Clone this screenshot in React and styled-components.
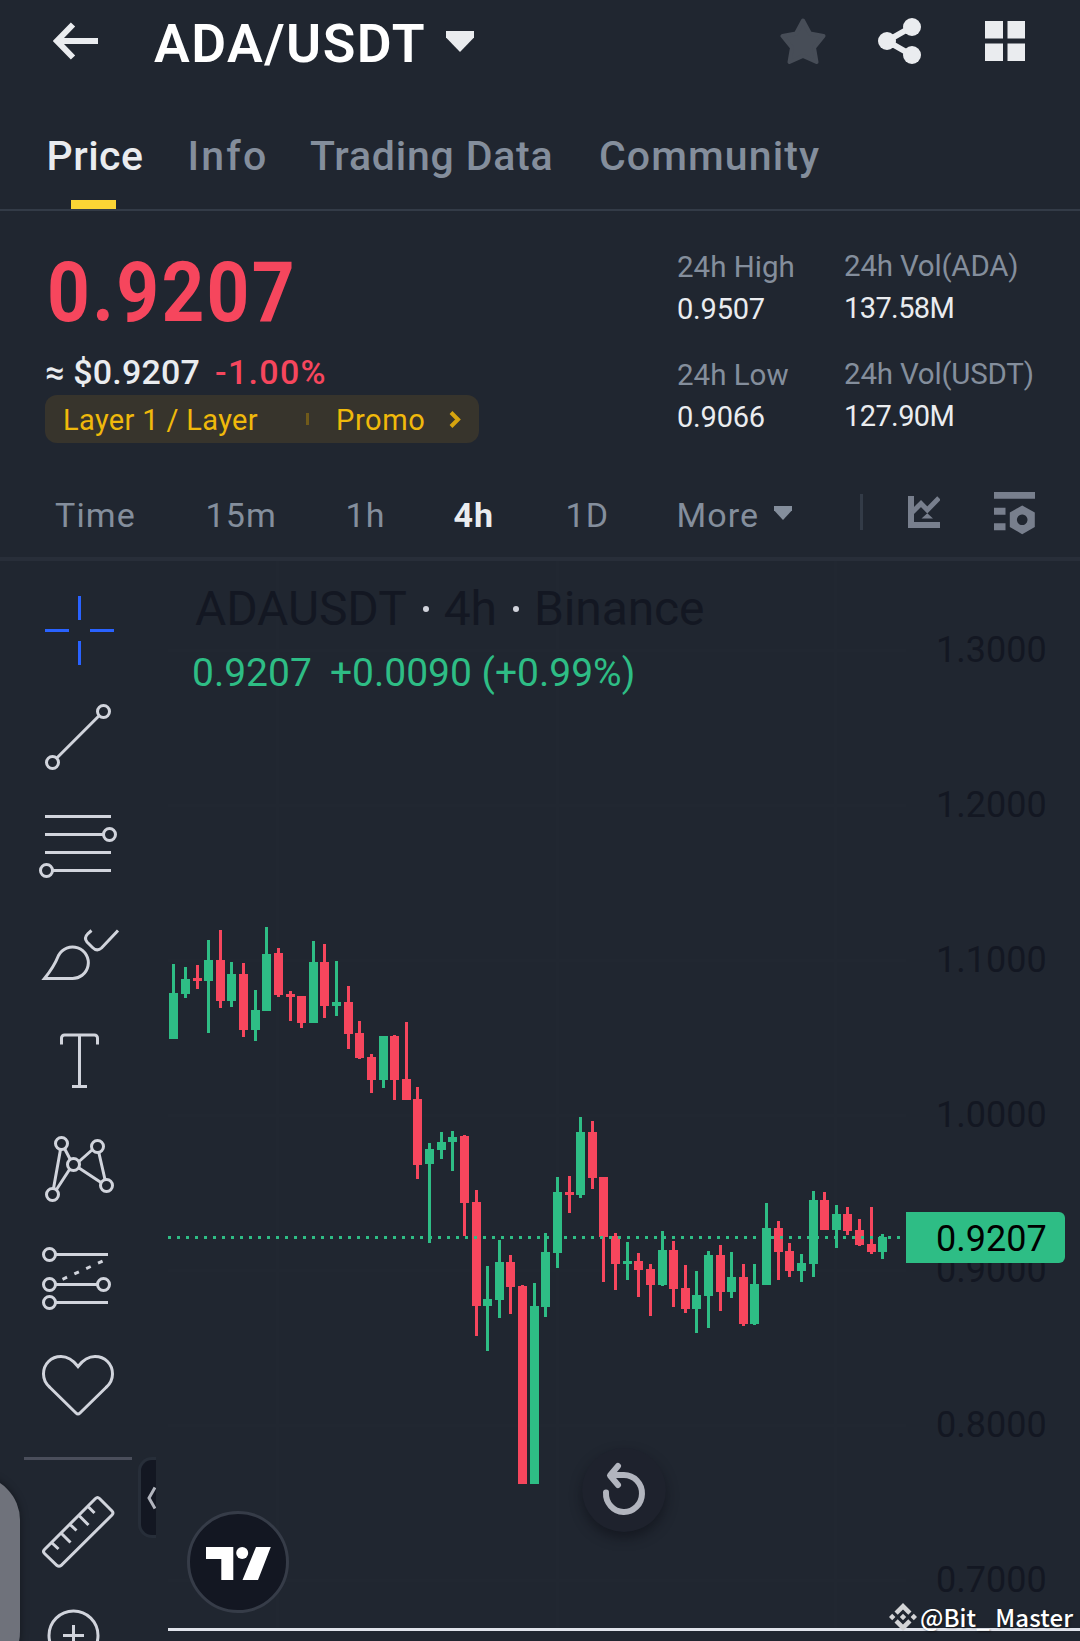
import { useState } from 'react';
import styled, { createGlobalStyle } from 'styled-components';

const GlobalStyle = createGlobalStyle`
  * {
    box-sizing: border-box;
  }
  body {
    margin: 0;
    background-color: #202630;
    font-family: Roboto, "Liberation Sans", sans-serif;
  }
  button {
    border: none;
    padding: 0;
    background-color: transparent;
    font-family: inherit;
    cursor: pointer;
  }
  svg {
    display: block;
    flex-shrink: 0;
  }
`;

const Screen = styled.div`
  position: relative;
  width: 1080px;
  height: 1641px;
  overflow: hidden;
  background-color: #202630;
  color: #eaecef;
`;

/* header */
const Header = styled.header`
  display: flex;
  align-items: center;
  height: 84px;
  padding: 0 55px 2px 53px;
`;
const Pair = styled.h1`
  margin: 5px 21px 0 55px;
  width: 271px;
  font-size: 53.5px;
  line-height: 60px;
  font-weight: 600;
  letter-spacing: 1.5px;
  white-space: nowrap;
  color: white;
`;
const HeaderIcons = styled.div`
  display: flex;
  align-items: center;
  gap: 51.5px;
  margin-left: auto;
  svg:last-child {
    margin-left: 13px;
  }
`;

/* tabs */
const Tabs = styled.nav`
  display: grid;
  grid-template-columns: 141px 122.5px 289px 300px;
  height: 127px;
  padding-left: 46.5px;
  border-bottom: 2px solid #333b47;
`;
const Tab = styled.button`
  display: flex;
  flex-direction: column;
  align-items: flex-start;
  padding-top: 48px;
  font-size: 41px;
  line-height: 48px;
  font-weight: 500;
  letter-spacing: ${(p) => p.$spacing}px;
  white-space: nowrap;
  color: ${(p) => (p.$on ? '#eaecef' : '#848e9c')};
  &::after {
    content: "";
    width: 45px;
    height: 9px;
    margin: auto 0 0 24.5px;
    background-color: ${(p) => (p.$on ? '#fcd535' : 'transparent')};
  }
`;

/* price summary */
const Summary = styled.section`
  display: flex;
  height: 262px;
`;
const PriceBox = styled.div`
  width: 677px;
  padding: 40px 0 0 45px;
`;
const LastPrice = styled.div`
  margin-left: 2px;
  transform: scaleX(0.9);
  transform-origin: left;
  font-size: 83px;
  line-height: 84px;
  font-weight: 700;
  letter-spacing: 2.6px;
  color: #f6465d;
`;
const SubPrice = styled.div`
  display: flex;
  gap: 15px;
  margin-top: 15px;
  font-size: 34px;
  line-height: 44px;
  font-weight: 500;
  letter-spacing: 0.2px;
  span:last-child {
    letter-spacing: 1.3px;
    color: #f6465d;
  }
`;
const LayerTag = styled.div`
  display: flex;
  align-items: center;
  width: 434px;
  height: 48px;
  margin-top: 1px;
  padding: 0 18px 0 18px;
  border-radius: 12px;
  background-color: #37342c;
  font-size: 29px;
  line-height: 48px;
  letter-spacing: 0.35px;
  color: #f0b90b;
  span {
    padding-top: 2px;
  }
`;
const TagSplit = styled.i`
  width: 3px;
  height: 12px;
  margin: 0 27px 0 auto;
  background-color: #705a1a;
`;
const Promo = styled.span`
  width: 89px;
  margin-right: 24px;
  letter-spacing: 0.6px;
`;
const Stats = styled.div`
  display: flex;
  flex-direction: column;
  gap: 24px;
  width: ${(p) => p.$width}px;
  padding-top: ${(p) => p.$top}px;
`;
const StatLabel = styled.div`
  font-size: 29.5px;
  line-height: 42px;
  letter-spacing: ${(p) => p.$spacing}px;
  white-space: nowrap;
  color: #848e9c;
`;
const StatValue = styled.div`
  font-size: 29px;
  line-height: 42px;
  letter-spacing: ${(p) => p.$spacing}px;
`;

/* intervals */
const Intervals = styled.nav`
  display: grid;
  grid-template-columns: 150.5px 140px 108px 112px 111px 183.5px 48px 86px 42px;
  align-items: center;
  height: 88px;
  padding-left: 55px;
  border-bottom: 4px solid #282e39;
`;
const Interval = styled.button`
  display: flex;
  align-items: center;
  gap: 15px;
  font-size: 34px;
  line-height: 44px;
  letter-spacing: 1.1px;
  font-weight: ${(p) => (p.$on ? 700 : 400)};
  color: ${(p) => (p.$on ? '#eaecef' : '#848e9c')};
  svg {
    margin-top: -5px;
  }
`;
const Divider = styled.i`
  width: 3px;
  height: 36px;
  margin-top: -7px;
  background-color: #333b47;
`;

/* chart */
const Body = styled.main`
  display: flex;
  height: 1080px;
`;
const Toolbar = styled.aside`
  width: 168px;
  padding-top: 16px;
  overflow: hidden;
`;
const ToolLine = styled.hr`
  width: 108px;
  height: 3px;
  margin: 16px 0 18px 24px;
  border: none;
  background-color: #4a4e5b;
`;
const ChartArea = styled.div`
  display: grid;
  grid-template-columns: 738px 174px;
  grid-template-rows: 1067px 13px;
`;
const Pane = styled.div`
  position: relative;
`;
const Legend = styled.div`
  position: absolute;
  top: 21px;
  left: 27px;
  white-space: nowrap;
`;
const LegendTitle = styled.div`
  display: flex;
  align-items: center;
  font-size: 48px;
  line-height: 54px;
  letter-spacing: -0.1px;
  color: #131722;
`;
const Dot = styled.i`
  width: 6px;
  height: 6px;
  margin: 0 ${(p) => p.$right}px 0 ${(p) => p.$left}px;
  border-radius: 50%;
  background-color: #d1d4dc;
`;
const LegendValues = styled.div`
  display: flex;
  gap: 18px;
  margin: 13px 0 0 -3px;
  font-size: 39px;
  line-height: 48px;
  color: #2ebd85;
`;
const Axis = styled.div`
  position: relative;
  overflow: hidden;
  padding: 11px 0 0 30px;
  font-size: 36px;
  color: #131722;
`;
const AxisLabel = styled.div`
  height: 155px;
  line-height: 157px;
`;
const PriceTag = styled.div`
  position: absolute;
  top: 651px;
  left: 0;
  width: 159px;
  height: 51px;
  padding-left: 30px;
  border-radius: 0 6px 6px 0;
  line-height: 55px;
  background-color: #2ebd85;
  color: black;
`;
const TimeAxis = styled.div`
  grid-column: 1 / 3;
  border-top: 3px solid #e0e3eb;
`;
const RoundLogo = styled.div`
  position: absolute;
  top: 950px;
  left: 19px;
  display: flex;
  align-items: center;
  justify-content: center;
  width: 102px;
  height: 102px;
  padding: 2px 0 0 1px;
  border: 3px solid #363c48;
  border-radius: 50%;
  background-color: #131722;
`;
const ResetButton = styled.button`
  position: absolute;
  top: 887px;
  left: 414px;
  width: 84px;
  height: 84px;
  border-radius: 50%;
  background-color: #1e222d;
  box-shadow: 0 6px 12px rgba(12, 14, 22, 0.55);
`;
const CollapseHandle = styled.button`
  position: absolute;
  top: 1457px;
  left: 138px;
  width: 18px;
  height: 81px;
  border: 3px solid #272e39;
  border-right: none;
  border-radius: 14px 0 0 14px;
  background-color: #131722;
  svg {
    margin-left: 6px;
  }
`;
const Drawer = styled.div`
  position: absolute;
  top: 1476px;
  left: -68px;
  width: 88px;
  height: 200px;
  border-radius: 44px;
  background-color: #6f727b;
  box-shadow: 0 0 8px rgba(0, 0, 0, 0.4);
`;
const Watermark = styled.div`
  position: absolute;
  top: 1600px;
  left: 889px;
  display: flex;
  align-items: center;
  gap: 3px;
  font-family: "Noto Sans CJK SC", "Noto Sans", sans-serif;
  font-size: 24px;
  line-height: 34px;
  font-weight: 500;
  letter-spacing: 0.1px;
  white-space: nowrap;
  color: white;
  text-shadow: 1px 1px 2px rgba(0, 0, 0, 0.5);
  svg {
    margin-top: -1px;
  }
`;

const GREEN = '#2ebd85';
const RED = '#f6465d';

// [up, left, high, body top, body bottom, low]
const candles = [
  [1, 169, 964, 993, 1039, 1039],
  [1, 181, 967, 979, 994, 998],
  [0, 193, 965, 978, 981, 989],
  [1, 204, 940, 960, 981, 1033],
  [0, 216, 930, 960, 1001, 1008],
  [1, 227, 962, 974, 1001, 1007],
  [0, 239, 963, 974, 1030, 1037],
  [1, 251, 990, 1010, 1030, 1041],
  [1, 262, 927, 954, 1011, 1011],
  [0, 274, 948, 953, 995, 997],
  [0, 286, 991, 994, 997, 1021],
  [0, 297, 996, 996, 1023, 1028],
  [1, 309, 941, 962, 1023, 1023],
  [0, 320, 944, 962, 1006, 1018],
  [1, 332, 961, 1002, 1006, 1016],
  [0, 344, 986, 1002, 1034, 1049],
  [0, 355, 1021, 1033, 1058, 1059],
  [0, 367, 1054, 1057, 1080, 1093],
  [1, 379, 1036, 1036, 1080, 1088],
  [0, 390, 1035, 1036, 1080, 1100],
  [0, 402, 1022, 1079, 1100, 1100],
  [0, 413, 1087, 1099, 1165, 1179],
  [1, 425, 1143, 1149, 1164, 1243],
  [1, 437, 1132, 1142, 1150, 1159],
  [1, 448, 1131, 1137, 1142, 1171],
  [0, 460, 1135, 1136, 1203, 1236],
  [0, 472, 1190, 1202, 1306, 1336],
  [1, 483, 1266, 1299, 1306, 1351],
  [1, 495, 1240, 1262, 1300, 1318],
  [0, 506, 1255, 1262, 1287, 1314],
  [0, 518, 1285, 1286, 1484, 1484],
  [1, 530, 1283, 1306, 1484, 1484],
  [1, 541, 1233, 1252, 1307, 1317],
  [1, 553, 1177, 1192, 1253, 1268],
  [0, 565, 1176, 1192, 1195, 1213],
  [1, 576, 1117, 1132, 1195, 1198],
  [0, 588, 1121, 1132, 1178, 1189],
  [0, 599, 1177, 1177, 1237, 1282],
  [0, 611, 1233, 1236, 1264, 1290],
  [1, 623, 1242, 1261, 1264, 1280],
  [0, 634, 1253, 1261, 1270, 1297],
  [0, 646, 1264, 1269, 1285, 1316],
  [1, 658, 1231, 1250, 1285, 1286],
  [0, 669, 1241, 1250, 1289, 1307],
  [0, 681, 1265, 1288, 1309, 1313],
  [1, 692, 1271, 1295, 1309, 1333],
  [1, 704, 1251, 1255, 1296, 1328],
  [0, 716, 1245, 1255, 1292, 1311],
  [1, 727, 1252, 1277, 1292, 1298],
  [0, 739, 1264, 1277, 1324, 1326],
  [1, 750, 1264, 1284, 1324, 1325],
  [1, 762, 1203, 1228, 1285, 1285],
  [0, 774, 1221, 1228, 1252, 1280],
  [0, 785, 1243, 1251, 1271, 1277],
  [1, 797, 1254, 1263, 1271, 1282],
  [1, 809, 1191, 1200, 1264, 1277],
  [0, 820, 1192, 1200, 1230, 1230],
  [1, 832, 1205, 1214, 1230, 1248],
  [0, 843, 1207, 1214, 1231, 1235],
  [0, 855, 1219, 1230, 1245, 1246],
  [0, 867, 1207, 1244, 1252, 1254],
  [1, 878, 1234, 1237, 1252, 1259],
];

const prices = ['1.3000', '1.2000', '1.1000', '1.0000', '0.9000', '0.8000', '0.7000'];

const tabs = [
  ['Price', 0.5],
  ['Info', 2.2],
  ['Trading Data', 0.8],
  ['Community', 1.1],
];

// lines and round handles of each drawing tool
const tools = [
  { name: 'cross', d: 'M79.5 19v24M79.5 64v24M45 53.5h24M90 53.5h24', color: '#2962ff' },
  { name: 'trend', d: 'M98.8 31L56.8 73', dots: [[103.5, 26.5], [52.5, 77.5]] },
  {
    name: 'fib',
    d: 'M45 23.5h66M45 41.5h58M45 59.5h66M53 77.5h58',
    dots: [[109.5, 41.5], [46.5, 77.5]],
  },
  {
    name: 'brush',
    d: 'M44.5 77.5H71.5A15.8 15.8 0 1 0 58.5 54.5C55.5 62 51 69.5 44.5 77.5ZM91.5 29.5L88 32.5Q83.5 37 87 41L92.5 46.5Q97 51 101.5 47L118 29.5',
  },
  {
    name: 'text',
    d: 'M61.5 35.5V29a3 3 0 0 1 3-3h30a3 3 0 0 1 3 3v6.5M79.5 26v51M72 77.5h15',
  },
  {
    name: 'pattern',
    d: 'M64.5 31.5L70 42M79 44.5L92 33M98.8 35.5L105 62.5M79 51L101 65.5M60.5 32.5L53.5 71.5M56.5 72.5L69.5 52.5',
    dots: [[61.5, 26.5], [97.5, 29.5], [73.5, 47.5], [106.5, 68.5], [52.5, 77.5]],
  },
  {
    name: 'forecast',
    d: 'M56 29.5h52M56 59.5h41M56 77.5h52',
    dashed: 'M62.5 54.3L104 35.5',
    dots: [[49.5, 29.5], [49.5, 59.5], [103.5, 59.5], [49.5, 77.5]],
  },
  {
    name: 'heart',
    d: 'M78 33.5C73 27 68 23.5 61 23.5C51 23.5 43.5 31 43.5 41C43.5 47 46 51 50 54.5L76 80Q78 82 80 80L106 54.5C110 51 112.5 47 112.5 41C112.5 31 105 23.5 95 23.5C88 23.5 83 27 78 33.5Z',
  },
];
const lowerTools = [
  {
    name: 'ruler',
    d: 'M95.5 20.5Q97.5 18.5 99.5 20.5L112 33Q114 35 112 37L61 87.5Q59 89 57 87.5L44.5 75.5Q42.5 73.5 44.5 71.5ZM51.5 64.5L58.5 71M61 55L70.5 64.5M70 46.5L76.5 52.5M79 37.5L88.5 47M88 28.5L94.5 35',
  },
  { name: 'zoom', d: 'M63 49.5h21M73.5 39v21M98 49.5A24.5 24.5 0 1 1 49 49.5A24.5 24.5 0 1 1 98 49.5' },
];

function Caret({ width, height }) {
  return (
    <svg width={width} height={height} viewBox="0 0 28 21" preserveAspectRatio="none">
      <path d="M0 0h28v6.5L14 21L0 6.5z" fill="currentColor" />
    </svg>
  );
}

function Tool({ d, dots = [], dashed, color = '#d1d4dc' }) {
  return (
    <svg width="156" height="108" fill="none" stroke={color} strokeWidth="3">
      <path d={d} />
      {dashed && <path d={dashed} strokeDasharray="5 8" />}
      {dots.map(([x, y]) => (
        <circle key={x + '-' + y} cx={x} cy={y} r="6" />
      ))}
    </svg>
  );
}

function Candles() {
  return (
    <svg width="738" height="1067" viewBox="168 561 738 1067" shapeRendering="crispEdges">
      <g fill="#212731">
        {[276, 556, 834].map((x) => (
          <rect key={x} x={x} y="561" width="3" height="1067" />
        ))}
        {prices.map((p, i) => (
          <rect key={p} x="168" y={649 + i * 155} width="738" height="3" />
        ))}
      </g>
      {candles.map(([up, x, high, top, bottom, low]) => (
        <g key={x} fill={up ? GREEN : RED}>
          <rect x={x + 3} y={high} width="3" height={low - high} />
          <rect x={x} y={top} width="9" height={bottom - top} />
        </g>
      ))}
      <path d="M168 1237.5H901" stroke={GREEN} strokeWidth="3" strokeDasharray="3 6" />
    </svg>
  );
}

function App() {
  const [tab, setTab] = useState('Price');
  const [interval, setInterval] = useState('4h');

  return (
    <Screen>
      <GlobalStyle />
      <Header>
        <svg width="46" height="38" fill="none" stroke="#eaecef" strokeWidth="6">
          <path d="M20 2.5L4 19L20 35.5M4 19H45" />
        </svg>
        <Pair>ADA/USDT</Pair>
        <Caret width={28} height={21} />
        <HeaderIcons>
          <svg width="46" height="47">
            <path
              d="M23 2.5L30 15.5L43.5 18L34 29.7L36.5 44L23 38L9.5 44L12 29.7L2.5 18L16 15.5Z"
              fill="#474d57"
              stroke="#474d57"
              strokeWidth="4"
              strokeLinejoin="round"
            />
          </svg>
          <svg width="43" height="46" fill="#eaecef">
            <path d="M33.5 9L9 23L33.5 37" fill="none" stroke="#eaecef" strokeWidth="6" />
            <circle cx="34" cy="9" r="9" />
            <circle cx="9" cy="23" r="9" />
            <circle cx="34" cy="37" r="9" />
          </svg>
          <svg width="40" height="40" fill="#eaecef">
            <path d="M0 0h18v17.5H0zM22.5 0h17.5v17.5H22.5zM0 22.5h18V40H0zM22.5 22.5h17.5V40H22.5z" />
          </svg>
        </HeaderIcons>
      </Header>

      <Tabs>
        {tabs.map(([name, spacing]) => (
          <Tab key={name} $on={tab === name} $spacing={spacing} onClick={() => setTab(name)}>
            {name}
          </Tab>
        ))}
      </Tabs>

      <Summary>
        <PriceBox>
          <LastPrice>0.9207</LastPrice>
          <SubPrice>
            <span>≈ $0.9207</span>
            <span>-1.00%</span>
          </SubPrice>
          <LayerTag>
            <span>Layer 1 / Layer</span>
            <TagSplit />
            <Promo>Promo</Promo>
            <svg width="12" height="17" fill="none" stroke="#d6a40f" strokeWidth="4">
              <path d="M2 1.5L9 8.5L2 15.5" />
            </svg>
          </LayerTag>
        </PriceBox>
        <Stats $width={167} $top={35}>
          <div>
            <StatLabel $spacing={0}>24h High</StatLabel>
            <StatValue $spacing={-0.2}>0.9507</StatValue>
          </div>
          <div>
            <StatLabel $spacing={0}>24h Low</StatLabel>
            <StatValue $spacing={-0.2}>0.9066</StatValue>
          </div>
        </Stats>
        <Stats $width={200} $top={34}>
          <div>
            <StatLabel $spacing={-0.2}>24h Vol(ADA)</StatLabel>
            <StatValue $spacing={-0.6}>137.58M</StatValue>
          </div>
          <div>
            <StatLabel $spacing={-0.2}>24h Vol(USDT)</StatLabel>
            <StatValue $spacing={-0.6}>127.90M</StatValue>
          </div>
        </Stats>
      </Summary>

      <Intervals>
        {['Time', '15m', '1h', '4h', '1D'].map((name) => (
          <Interval key={name} $on={interval === name} onClick={() => setInterval(name)}>
            {name}
          </Interval>
        ))}
        <Interval>
          More
          <Caret width={18} height={14} />
        </Interval>
        <Divider />
        <svg width="32" height="38" fill="#787f8d">
          <path d="M0 0h6v26h26v6H0zM19.3 17.3L25 22.5H13.5z" />
          <path d="M4 16.5L13 7.5L19.3 14L31 2" fill="none" stroke="#787f8d" strokeWidth="5" />
        </svg>
        <svg width="42" height="47" fill="#787f8d">
          <path d="M0 0h41v6.7H0zM0 15.7h11.5v7H0zM0 31.3h11.5v7H0z" />
          <path
            fillRule="evenodd"
            d="M28.2 13.5L40.8 20.5V35L28.2 42.2L15.8 35V20.5zM28.2 22.5a5.3 5.3 0 1 0 .01 0z"
          />
        </svg>
      </Intervals>

      <Body>
        <Toolbar>
          {tools.map((tool) => (
            <Tool key={tool.name} {...tool} />
          ))}
          <ToolLine />
          {lowerTools.map((tool) => (
            <Tool key={tool.name} {...tool} />
          ))}
        </Toolbar>
        <ChartArea>
          <Pane>
            <Candles />
            <Legend>
              <LegendTitle>
                ADAUSDT
                <Dot $left={16} $right={15} />
                4h
                <Dot $left={16} $right={15} />
                Binance
              </LegendTitle>
              <LegendValues>
                <span>0.9207</span>
                <span>+0.0090 (+0.99%)</span>
              </LegendValues>
            </Legend>
            <RoundLogo>
              <svg width="65" height="33" fill="white">
                <path d="M0 0h27.3v33H15.3V12H0zM50 0h14.8L52 33H36.5z" />
                <circle cx="36.2" cy="6" r="6" />
              </svg>
            </RoundLogo>
            <ResetButton>
              <svg
                width="84"
                height="84"
                fill="none"
                stroke="#b2b5be"
                strokeWidth="6"
                strokeLinecap="round"
                strokeLinejoin="round"
              >
                <path d="M24 44.5A18 18.5 0 1 0 42 27H29M36 18L28 27.5L36 37" />
              </svg>
            </ResetButton>
          </Pane>
          <Axis>
            {prices.map((p) => (
              <AxisLabel key={p}>{p}</AxisLabel>
            ))}
            <PriceTag>0.9207</PriceTag>
          </Axis>
          <TimeAxis />
        </ChartArea>
      </Body>

      <CollapseHandle>
        <svg width="9" height="24" fill="none" stroke="#b2b5be" strokeWidth="3">
          <path d="M8 1.5L2 12L8 22.5" />
        </svg>
      </CollapseHandle>
      <Drawer />
      <Watermark>
        <svg width="28" height="28" viewBox="0 0 28 28" fill="#d3d4d6">
          <path d="M14 0L22.5 8.5L19.3 11.7L14 6.4L8.7 11.7L5.5 8.5zM14 28L5.5 19.5L8.7 16.3L14 21.6L19.3 16.3L22.5 19.5zM3.2 10.8L6.4 14L3.2 17.2L0 14zM24.8 10.8L28 14L24.8 17.2L21.6 14zM14 10.8L17.2 14L14 17.2L10.8 14z" />
        </svg>
        @Bit_ Master
      </Watermark>
    </Screen>
  );
}

export default App;
